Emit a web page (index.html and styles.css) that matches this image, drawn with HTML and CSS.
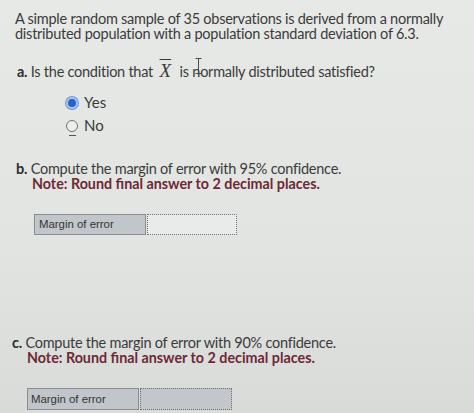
FILE: index.html
```html
<!DOCTYPE html>
<html>
<head>
<meta charset="utf-8">
<link rel="stylesheet" href="styles.css">
</head>
<body>
<div class="page">
  <p class="intro">A simple random sample of 35 observations is derived from a normally<br>distributed population with a population standard deviation of 6.3.</p>

  <section class="part part-a">
    <p class="q"><b class="lbl">a.</b> Is the condition that <span class="xbar">X</span> is normally distributed satisfied?</p>
    <svg class="ibeam" width="7" height="16" viewBox="0 0 7 16"><path d="M0.5 0.5h6M3.5 0.5v15M0.5 15.5h6" stroke="#4a4a4a" stroke-width="1" fill="none"/></svg>
    <div class="options">
      <label class="opt"><span class="radio on"></span>Yes</label>
      <label class="opt"><span class="radio off"></span>No</label>
    </div>
  </section>

  <section class="part part-b">
    <p class="q"><b class="lbl">b.</b> Compute the margin of error with 95% confidence.</p>
    <p class="note">Note: Round final answer to 2 decimal places.</p>
    <div class="answer">
      <div class="cell-label">Margin of error</div>
      <div class="cell-input"></div>
    </div>
  </section>

  <section class="part part-c">
    <p class="q"><b class="lbl">c.</b> Compute the margin of error with 90% confidence.</p>
    <p class="note">Note: Round final answer to 2 decimal places.</p>
    <div class="answer answer-c">
      <div class="cell-label">Margin of error</div>
      <div class="cell-input"></div>
    </div>
  </section>
</div>
</body>
</html>
```

FILE: styles.css
```css
html, body {
  margin: 0;
  padding: 0;
}
body {
  background: linear-gradient(180deg, #e7e9e7 0%, #e2e4e2 60%, #d9dbd9 100%);
  font-family: Lato, "Liberation Sans", sans-serif;
  color: #3b3b3b;
  width: 474px;
  height: 413px;
  overflow: hidden;
}
.page {
  padding: 11px 0 0 15px;
}
p {
  margin: 0;
}
.intro {
  font-size: 14.5px;
  letter-spacing: -0.25px;
  line-height: 15px;
  white-space: nowrap;
}
.part {
  position: relative;
}
.q {
  font-size: 14.5px;
  letter-spacing: -0.25px;
  line-height: 15px;
  white-space: nowrap;
}
.part-a {
  margin-top: 22px;
}
.part-a .q {
  padding-left: 2px;
}
.lbl {
  font-weight: 700;
  color: #2e2e2e;
}
.xbar {
  font-family: "Liberation Serif", serif;
  font-style: italic;
  font-size: 19px;
  line-height: 15px;
  text-decoration: overline;
  text-decoration-thickness: 1px;
  padding: 0 5px 0 3px;
  letter-spacing: 0;
}
.ibeam {
  position: absolute;
  left: 180px;
  top: -5px;
}
.options {
  display: flex;
  flex-direction: column;
  gap: 6px;
  margin: 15px 0 0 51px;
}
.opt {
  display: flex;
  align-items: center;
  gap: 6px;
  font-size: 15px;
  line-height: 17px;
  height: 17px;
}
.radio {
  box-sizing: border-box;
  width: 12px;
  height: 12px;
  border-radius: 50%;
  position: relative;
}
.radio.on {
  border: 2.5px solid #a9c6f0;
  background: #2a5fcc;
  box-shadow: 0 0 0 1px #6f97dc;
}
.radio.off {
  border: 1px solid #707070;
  background: #eeeeee;
}
.radio.off::after {
  content: "";
  position: absolute;
  left: 2px;
  top: 14px;
  width: 7px;
  height: 1.5px;
  background: #555;
}
.part-b {
  margin-top: 27px;
  padding-left: 1px;
}
.note {
  font-size: 14.3px;
  line-height: 16px;
  font-weight: 700;
  color: #6c2934;
  padding-left: 16px;
  white-space: nowrap;
}
.answer {
  display: flex;
  margin: 22px 0 0 18px;
  width: 203px;
  height: 21px;
}
.cell-label {
  width: 112px;
  box-sizing: border-box;
  border: 1px solid #8a8e92;
  background: #c1c6cb;
  font-family: "Liberation Sans", Arial, sans-serif;
  font-size: 11.4px;
  line-height: 19px;
  padding-left: 4px;
  color: #333;
}
.cell-input {
  flex: 1;
  box-sizing: border-box;
  border: 1px dotted #6f7377;
  margin-left: 1px;
  background: #e9ebeb;
}
.part-c {
  margin-top: 100px;
  margin-left: -3px;
}
.part-c .note {
  padding-left: 15px;
  line-height: 15px;
}
.answer-c {
  margin: 23px 0 0 15px;
  width: 205px;
  height: 22px;
}
.answer-c .cell-label {
  line-height: 20px;
  padding-left: 3px;
}
.answer-c .cell-input {
  background: #c3c7cb;
}
```
